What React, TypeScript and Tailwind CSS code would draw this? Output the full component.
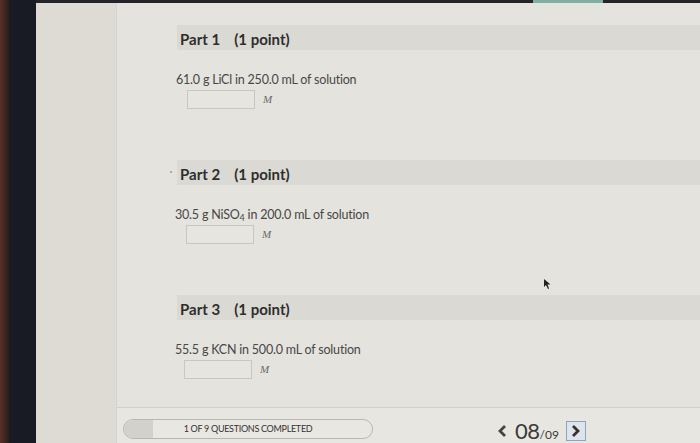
import React from "react";

function Part({ n, text, inputMl, textMl, dot }: { n: number; text: React.ReactNode; inputMl: string; textMl: string; dot?: boolean }) {
  return (
    <div className="flex flex-col">
      <div className="relative ml-[60px] flex h-[25px] items-center bg-[#dbd9d4] pl-[3px] pt-[3px]">
        {dot && <span className="absolute left-[-7px] top-[11px] h-[2px] w-[2px] rounded-full bg-[#9a9893]" />}
        <span className="text-[15px] font-bold text-[#2e2e2e]">Part {n}</span>
        <span className="ml-[14px] text-[15px] font-bold text-[#2e2e2e]">(1 point)</span>
      </div>
      <div className={`mt-[22px] h-[16px] text-[12.5px] leading-[16px] tracking-[-0.2px] text-[#474747] ${textMl}`}>{text}</div>
      <div className={`mt-[2px] flex items-center ${inputMl}`}>
        <div className="h-[19px] w-[68px] border border-[#c9c7c1] bg-[#e7e5e0]" />
        <span className="ml-[8px] text-[11px] italic text-[#6a6a6a]" style={{ fontFamily: '"Liberation Serif", serif' }}>M</span>
      </div>
    </div>
  );
}

export default function App() {
  return (
    <div className="relative flex h-[443px] w-[700px] overflow-hidden bg-[#e5e3de]" style={{ fontFamily: 'Lato, "Open Sans", sans-serif' }}>
      <div className="flex w-[36px] shrink-0">
        <div className="w-[9px] bg-gradient-to-r from-[#5a3026] to-[#2a1c1c]" />
        <div className="flex-1 bg-[#181b24]" />
      </div>
      <div className="flex flex-1 flex-col">
        <div className="flex h-[3px] shrink-0 bg-[#22242a]">
          <div className="ml-[497px] w-[70px] bg-[#7fb0a2]" />
        </div>
        <div className="flex flex-1">
          <div className="w-[81px] shrink-0 border-r border-[#d6d3cd] bg-[#dedbd5]" />
          <div className="flex flex-1 flex-col">
            <div className="flex flex-1 flex-col pt-[22px]">
              <Part n={1} text="61.0 g LiCl in 250.0 mL of solution" textMl="ml-[59px]" inputMl="ml-[70px]" />
              <div className="h-[51px]" />
              <Part
                n={2}
                dot
                text={<>30.5 g NiSO<sub className="text-[9px]">4</sub> in 200.0 mL of solution</>}
                textMl="ml-[58px]"
                inputMl="ml-[69px]"
              />
              <div className="h-[51px]" />
              <Part n={3} text="55.5 g KCN in 500.0 mL of solution" textMl="ml-[58px]" inputMl="ml-[67px]" />
            </div>
            <div className="flex h-[36px] shrink-0 items-start border-t border-[#d2d0ca] bg-[#e8e6e1]">
              <div className="relative ml-[6px] mt-[11px] flex h-[20px] w-[250px] items-center justify-center overflow-hidden rounded-full border border-[#b9b7b1] bg-[#e9e7e2]">
                <div className="absolute left-0 top-0 h-full w-[29px] bg-[#d3d1cc]" />
                <span className="relative text-[9px] tracking-[-0.3px] text-[#333]">1 OF 9 QUESTIONS COMPLETED</span>
              </div>
              <div className="ml-[124px] mt-[10px] flex h-[26px] items-center">
                <svg width="11" height="14" viewBox="0 0 11 14"><path d="M8 2 L3 7 L8 12" fill="none" stroke="#444" strokeWidth="2.8" /></svg>
                <div className="ml-[7px] flex items-baseline">
                  <span className="text-[22px] leading-[26px] tracking-[-0.5px] text-[#3a3a3a]">08</span>
                  <span className="text-[12px] leading-[14px] text-[#3a3a3a]">/09</span>
                </div>
                <div className="ml-[7px] flex h-[20px] w-[20px] items-center justify-center border border-[#8aa4c8] bg-[#dfe3ea]">
                  <svg width="11" height="14" viewBox="0 0 11 14"><path d="M3 2 L8 7 L3 12" fill="none" stroke="#333" strokeWidth="2.8" /></svg>
                </div>
              </div>
            </div>
          </div>
        </div>
      </div>
      <svg className="absolute left-[543px] top-[278px]" width="9" height="12" viewBox="0 0 9 12">
        <path d="M1 1 L1 9 L3 7 L5 11 L6 10.5 L4.5 6.5 L7.5 6.5 Z" fill="#222" />
      </svg>
    </div>
  );
}
